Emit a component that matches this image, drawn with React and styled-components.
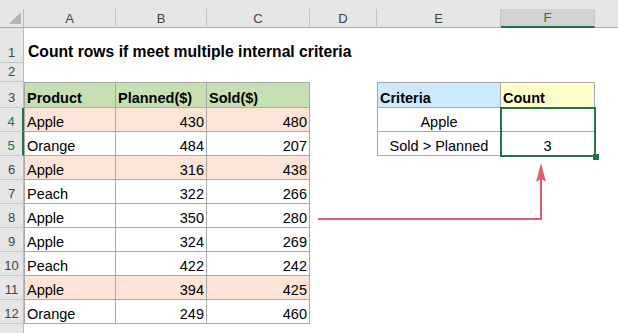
import React from 'react';
import styled, { createGlobalStyle } from 'styled-components';

const GlobalStyle = createGlobalStyle`
  * { box-sizing: border-box; }
  body {
    margin: 0;
    background: #ffffff;
    font-family: "Liberation Sans", Arial, sans-serif;
    color: #000;
  }
`;

const Frame = styled.div`
  position: relative;
  width: 618px;
  height: 333px;
  overflow: hidden;
  background: #ffffff;
`;

const Sheet = styled.div`
  display: grid;
  grid-template-columns: 24px 92px 91px 103px 67px 124px 94px 92px;
  grid-template-rows: 9px 19px 35px 19px 26px repeat(10, 24px);
`;

const TopStrip = styled.div`
  grid-column: 1 / -1;
  background: #e6e6e6;
`;

const Corner = styled.div`
  display: flex;
  align-items: flex-end;
  justify-content: flex-end;
  padding: 0 2px 3px 0;
  background: #e6e6e6;
  border-right: 1px solid #bcbcbc;
  border-bottom: 1px solid #ababab;
  &::after {
    content: '';
    width: 0;
    height: 0;
    border-left: 12px solid transparent;
    border-bottom: 12px solid #b6b6b6;
  }
`;

const ColHead = styled.div`
  display: flex;
  align-items: center;
  justify-content: center;
  font-size: 13px;
  color: ${(p) => (p.$active ? '#217346' : '#444')};
  background: ${(p) => (p.$active ? '#d2d2d2' : '#e6e6e6')};
  border-right: 1px solid #c4c4c4;
  border-bottom: ${(p) => (p.$active ? '2px solid #217346' : '1px solid #ababab')};
`;

const RowHead = styled.div`
  display: flex;
  align-items: flex-end;
  justify-content: center;
  padding-bottom: 3px;
  font-size: 13px;
  line-height: 13px;
  color: ${(p) => (p.$active ? '#217346' : '#444')};
  background: #e6e6e6;
  border-bottom: 1px solid #c8c8c8;
  border-right: ${(p) => (p.$active ? '2px solid #217346' : '1px solid #bcbcbc')};
`;

const alignMap = { left: 'flex-start', right: 'flex-end', center: 'center' };

const Cell = styled.div`
  display: flex;
  align-items: flex-end;
  justify-content: ${(p) => alignMap[p.$align || 'left']};
  padding: 0 2px 1px 2px;
  background: ${(p) => p.$bg || 'transparent'};
  font-size: 14.5px;
  line-height: 15px;
  font-weight: ${(p) => (p.$bold ? 700 : 400)};
  white-space: nowrap;
  border-right: ${(p) => (p.$boxed ? '1px solid #a9a9a9' : 'none')};
  border-bottom: ${(p) => (p.$boxed ? '1px solid #a9a9a9' : 'none')};
  border-top: ${(p) => (p.$top ? '1px solid #a9a9a9' : 'none')};
  border-left: ${(p) => (p.$left ? '1px solid #a9a9a9' : 'none')};
`;

const Title = styled.div`
  grid-column: span 7;
  display: flex;
  align-items: flex-end;
  padding: 0 0 3px 4px;
  font-size: 15.7px;
  line-height: 16px;
  font-weight: 700;
  white-space: nowrap;
`;

const Selection = styled.div`
  position: absolute;
  left: 500px;
  top: 107px;
  width: 96px;
  height: 50px;
  border: 2px solid #217346;
  pointer-events: none;
  &::after {
    content: '';
    position: absolute;
    right: -5px;
    bottom: -5px;
    width: 6px;
    height: 6px;
    background: #217346;
  }
`;

const Overlay = styled.svg`
  position: absolute;
  left: 0;
  top: 0;
  pointer-events: none;
`;

const GREEN = '#c6e0b4';
const PEACH = '#fce4d6';
const BLUE = '#cde9fb';
const YELLOW = '#ffffcc';

const products = [
  ['Apple', 430, 480],
  ['Orange', 484, 207],
  ['Apple', 316, 438],
  ['Peach', 322, 266],
  ['Apple', 350, 280],
  ['Apple', 324, 269],
  ['Peach', 422, 242],
  ['Apple', 394, 425],
  ['Orange', 249, 460],
];

const criteria = {
  4: 'Apple',
  5: 'Sold > Planned',
};
const counts = { 5: '3' };

// G is only a sliver at the right edge, its letter sits off-screen
const columns = ['A', 'B', 'C', 'D', 'E', 'F', ''];

function DataRow({ n, item }) {
  const peach = item[0] === 'Apple' && item[2] > item[1] ? PEACH : null;
  const hasCrit = n in criteria;
  return (
    <>
      <RowHead $active={n === 4 || n === 5}>{n}</RowHead>
      <Cell $boxed $left $bg={peach}>{item[0]}</Cell>
      <Cell $boxed $align="right" $bg={peach}>{item[1]}</Cell>
      <Cell $boxed $align="right" $bg={peach}>{item[2]}</Cell>
      <Cell />
      <Cell $boxed={hasCrit} $left={hasCrit} $align="center">{criteria[n]}</Cell>
      <Cell $boxed={hasCrit} $align="center">{counts[n]}</Cell>
      <Cell />
    </>
  );
}

export default function App() {
  return (
    <>
      <GlobalStyle />
      <Frame>
        <Sheet>
          <TopStrip />
          <Corner />
          {columns.map((c, i) => (
            <ColHead key={i} $active={c === 'F'}>{c}</ColHead>
          ))}

          <RowHead>1</RowHead>
          <Title>Count rows if meet multiple internal criteria</Title>

          <RowHead>2</RowHead>
          {columns.map((c, i) => <Cell key={i} />)}

          <RowHead>3</RowHead>
          <Cell $boxed $top $left $bold $bg={GREEN}>Product</Cell>
          <Cell $boxed $top $bold $bg={GREEN}>Planned($)</Cell>
          <Cell $boxed $top $bold $bg={GREEN}>Sold($)</Cell>
          <Cell />
          <Cell $boxed $top $left $bold $bg={BLUE}>Criteria</Cell>
          <Cell $boxed $top $bold $bg={YELLOW}>Count</Cell>
          <Cell />

          {products.map((item, i) => (
            <DataRow key={i} n={i + 4} item={item} />
          ))}

          <RowHead>13</RowHead>
          {columns.map((c, i) => <Cell key={i} />)}
        </Sheet>

        <Selection />

        <Overlay width="618" height="333" viewBox="0 0 618 333">
          <path d="M318 219 H541 V176" fill="none" stroke="#dc5f6e" strokeWidth="2" />
          <path d="M541 163 L546 182 L541 179 L536 182 Z" fill="#dc5f6e" />
        </Overlay>
      </Frame>
    </>
  );
}
